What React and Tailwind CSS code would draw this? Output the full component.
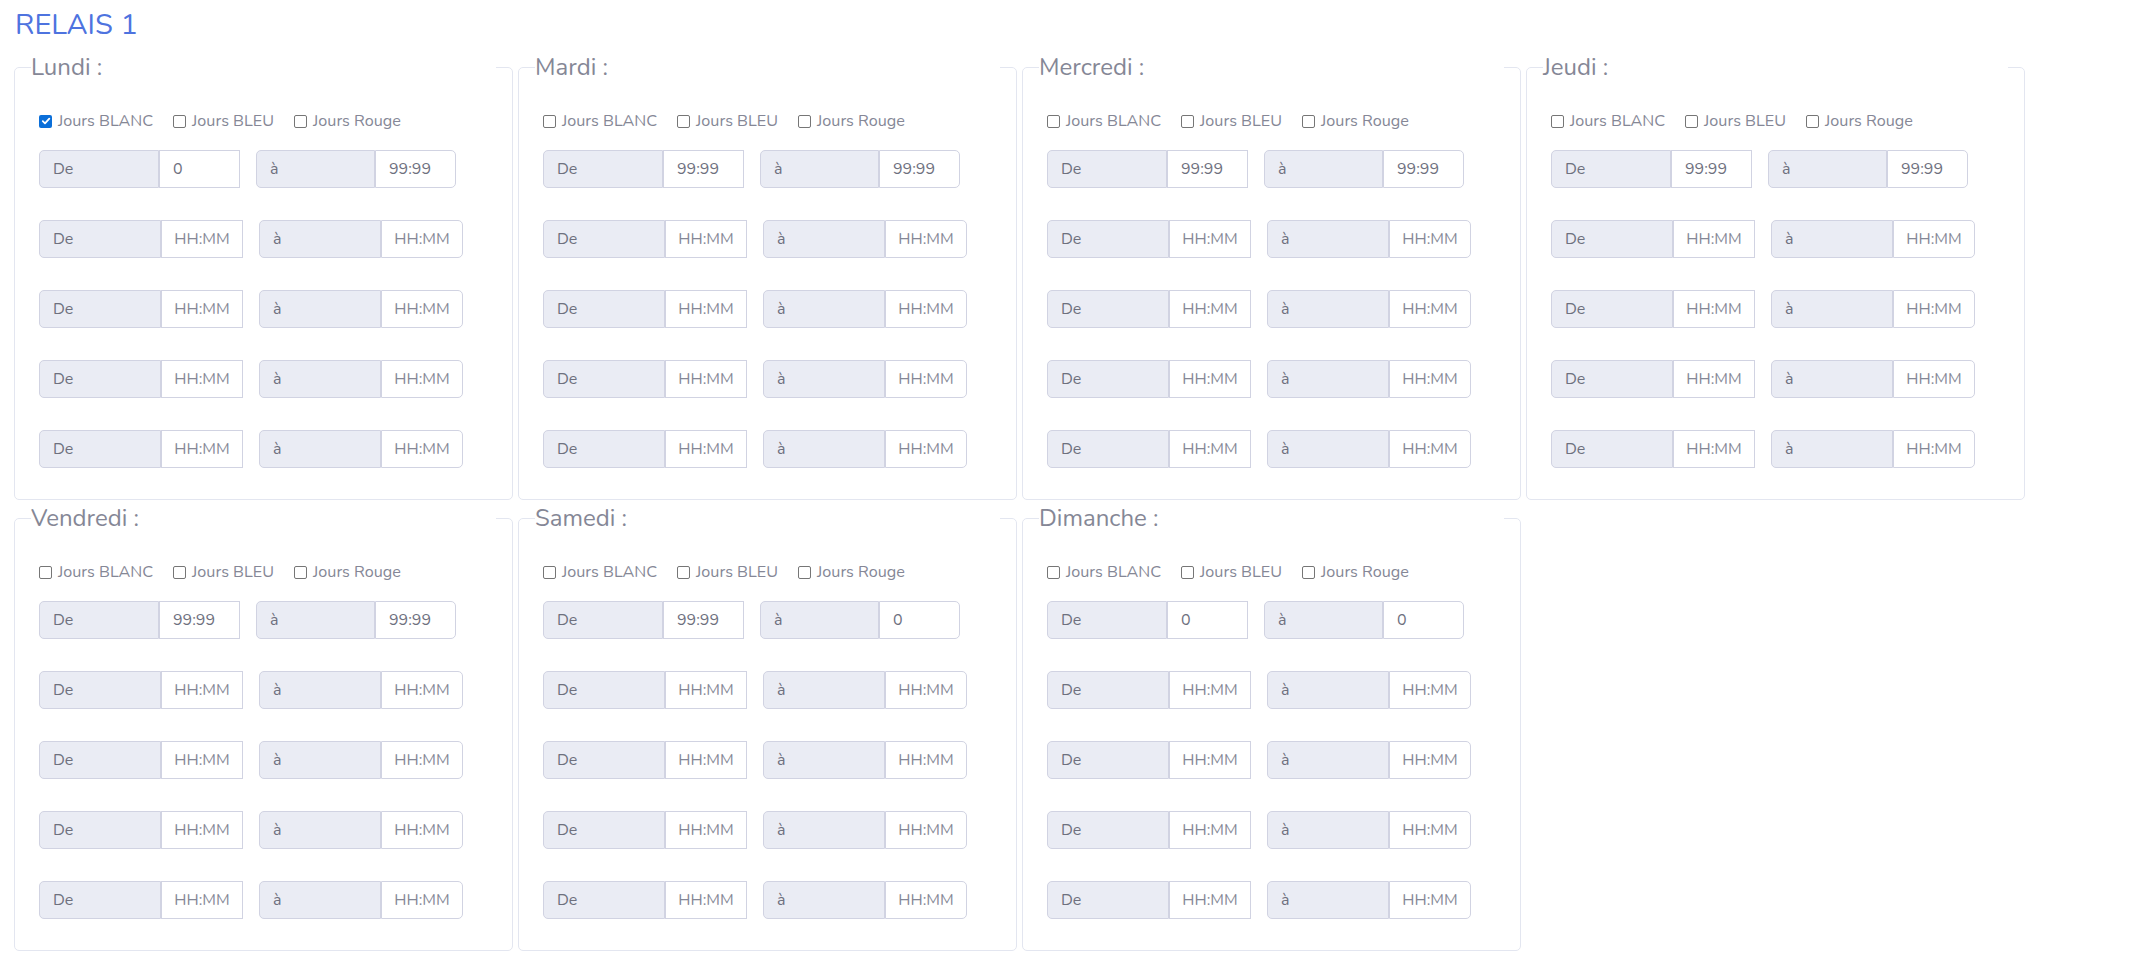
import React from "react";

const days = [
  { nom: "Lundi", blanc: true, de: "0", a: "99:99" },
  { nom: "Mardi", de: "99:99", a: "99:99" },
  { nom: "Mercredi", de: "99:99", a: "99:99" },
  { nom: "Jeudi", de: "99:99", a: "99:99" },
  { nom: "Vendredi", de: "99:99", a: "99:99" },
  { nom: "Samedi", de: "99:99", a: "0" },
  { nom: "Dimanche", de: "0", a: "0" },
];

const Check = ({ checked, label }) => (
  <label className="flex items-center h-[24px]">
    {checked ? (
      <span className="w-[13px] h-[13px] rounded-[2px] bg-[#0b6fd9] flex items-center justify-center mr-[6px]">
        <svg width="10" height="10" viewBox="0 0 10 10">
          <path d="M1.8 5.2 L4 7.3 L8.3 2.6" stroke="#fff" strokeWidth="1.8" fill="none" strokeLinecap="round" strokeLinejoin="round" />
        </svg>
      </span>
    ) : (
      <span className="w-[13px] h-[13px] rounded-[2px] border-[1.5px] border-[#767676] bg-white mr-[6px]" />
    )}
    <span className="text-[16.2px] text-[#858796]">{label}</span>
  </label>
);

const Ligne = ({ de, a, premiere }) => {
  const labelW = premiere ? "w-[120px]" : "w-[122px]";
  const inputW = premiere ? "w-[81px]" : "w-[82px]";
  const valueCls = premiere
    ? "text-[#6e707e] pl-[13px] text-left"
    : "text-[#858796] text-center";
  return (
    <div className="flex h-[38px] text-[16px]">
      <div className="flex">
        <div className={`${labelW} h-full bg-[#eaecf4] border border-[#d1d3e2] rounded-l-[5px] flex items-center pl-[13px] text-[#6e707e]`}>
          De
        </div>
        <div className={`${inputW} h-full bg-white border border-[#d1d3e2] flex items-center ${premiere ? "" : "justify-center"} ${valueCls}`}>
          {premiere ? de : "HH:MM"}
        </div>
      </div>
      <div className="flex ml-[16px]">
        <div className={`${premiere ? "w-[119px]" : "w-[122px]"} h-full bg-[#eaecf4] border border-[#d1d3e2] rounded-l-[5px] flex items-center pl-[13px] text-[#6e707e]`}>
          à
        </div>
        <div className={`${inputW} h-full bg-white border border-[#d1d3e2] rounded-r-[5px] flex items-center ${premiere ? "" : "justify-center"} ${valueCls}`}>
          {premiere ? a : "HH:MM"}
        </div>
      </div>
    </div>
  );
};

const Jour = ({ day }) => (
  <fieldset className="w-[499px] border border-[#e3e6f0] rounded-[5px] px-[16px] pb-[31px]">
    <legend className="w-full text-[24px] leading-[29px] text-[#858796]">{day.nom} :</legend>
    <div className="pl-[8px] pt-[27px]">
      <div className="flex gap-[20px]">
        <Check checked={day.blanc} label="Jours BLANC" />
        <Check label="Jours BLEU" />
        <Check label="Jours Rouge" />
      </div>
      <div className="mt-[17px] flex flex-col gap-[32px]">
        <Ligne de={day.de} a={day.a} premiere />
        <Ligne />
        <Ligne />
        <Ligne />
        <Ligne />
      </div>
    </div>
  </fieldset>
);

export default function App() {
  return (
    <div className="min-h-screen bg-white pt-[7px] pl-[14px]" style={{ fontFamily: "Nunito, Lato, 'Noto Sans', sans-serif" }}>
      <h3 className="text-[29px] leading-[35px] text-[#4e73df] ml-[1px] mb-[11px]">RELAIS 1</h3>
      <div className="flex flex-wrap gap-x-[5px] gap-y-[4px] w-[2011px]">
        {days.map((d) => (
          <Jour key={d.nom} day={d} />
        ))}
      </div>
    </div>
  );
}
